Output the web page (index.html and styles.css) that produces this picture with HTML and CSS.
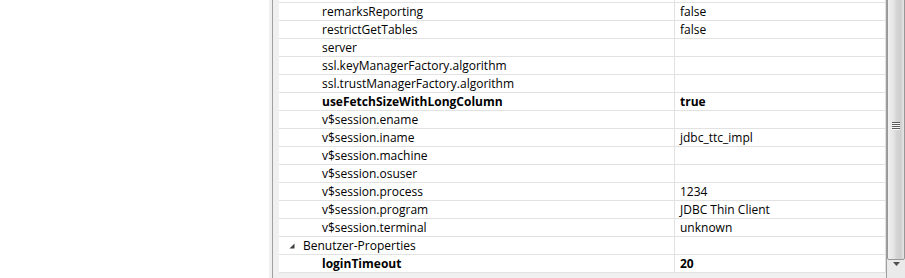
FILE: index.html
```html
<!DOCTYPE html>
<html lang="de">

<head>
    <meta charset="UTF-8">
    <meta name="viewport" content="width=device-width, initial-scale=1.0">
    <title>Properties</title>
    <link rel="stylesheet" href="styles.css">
</head>

<body>
    <div class="container">
        <div class="blank"></div>
        <div class="splitter"></div>

        <div class="panel">
            <div class="gutter"></div>

            <div class="grid">
                <!-- row scrolled out above, only its bottom line shows -->
                <div class="row"><div class="name"></div><div class="value"></div></div>
                <div class="row"><div class="name">remarksReporting</div><div class="value">false</div></div>
                <div class="row"><div class="name">restrictGetTables</div><div class="value">false</div></div>
                <div class="row"><div class="name">server</div><div class="value"></div></div>
                <div class="row"><div class="name">ssl.keyManagerFactory.algorithm</div><div class="value"></div></div>
                <div class="row"><div class="name">ssl.trustManagerFactory.algorithm</div><div class="value"></div></div>
                <div class="row bold"><div class="name">useFetchSizeWithLongColumn</div><div class="value">true</div></div>
                <div class="row"><div class="name">v$session.ename</div><div class="value"></div></div>
                <div class="row"><div class="name">v$session.iname</div><div class="value">jdbc_ttc_impl</div></div>
                <div class="row"><div class="name">v$session.machine</div><div class="value"></div></div>
                <div class="row"><div class="name">v$session.osuser</div><div class="value"></div></div>
                <div class="row"><div class="name">v$session.process</div><div class="value">1234</div></div>
                <div class="row"><div class="name">v$session.program</div><div class="value">JDBC Thin Client</div></div>
                <div class="row"><div class="name">v$session.terminal</div><div class="value">unknown</div></div>
                <div class="row group">
                    <div class="name">
                        <svg class="toggle" width="6" height="6" viewBox="0 0 6 6">
                            <polygon points="5.5,0.5 5.5,5.5 0.5,5.5" fill="#404040" />
                        </svg>
                        Benutzer-Properties
                    </div>
                    <div class="value"></div>
                </div>
                <div class="row bold"><div class="name">loginTimeout</div><div class="value">20</div></div>
            </div>

            <div class="scrollbar">
                <div class="thumb">
                    <div class="grip"><i></i><i></i><i></i><i></i></div>
                </div>
                <div class="arrow">
                    <svg width="7" height="4" viewBox="0 0 7 4">
                        <polygon points="0,0 7,0 3.5,4" fill="#505050" />
                    </svg>
                </div>
            </div>
        </div>
    </div>
</body>

</html>
```

FILE: styles.css
```css
* {
    margin: 0;
    padding: 0;
    box-sizing: border-box;
}

html,
body {
    height: 278px;
    overflow: hidden;
    background-color: #fff;
    font-family: "Open Sans", "Noto Sans", sans-serif;
    font-size: 12px;
    color: #000;
}

.container {
    height: 100%;
    display: flex;
}

.blank {
    width: 269px;
    background-color: #fff;
}

.splitter {
    width: 3px;
    background-color: #f0f0f0;
}

.panel {
    flex: 1 1 auto;
    display: flex;
    border-left: 1px solid #a0a0a0;
    background-color: #f0f0f0;
}

.gutter {
    width: 6px;
}

.grid {
    width: 607px;
    margin-top: -15px;
    align-self: flex-start;
    background-color: #fff;
    border-right: 1px solid #e0e0e0;
}

.row {
    display: flex;
    height: 18px;
    border-bottom: 1px solid #e2e2e2;
    line-height: 18px;
    white-space: nowrap;
}

.row .name {
    width: 396px;
    padding-left: 43px;
    border-right: 1px solid #e2e2e2;
    overflow: hidden;
}

.row .value {
    flex: 1 1 auto;
    padding-left: 5px;
}

.row.bold {
    font-weight: bold;
}

.row.group .name {
    padding-left: 10px;
    display: flex;
    align-items: center;
    gap: 8px;
}

.toggle {
    display: block;
}

.scrollbar {
    width: 19px;
    display: flex;
    flex-direction: column;
    border-left: 1px solid #a0a0a0;
    background-color: #eaeaea;
}

.scrollbar .thumb {
    height: 264px;
    margin-top: -4px;
    border: 1px solid #979797;
    border-radius: 2px;
    background: linear-gradient(to right, #f0f0f0 0%, #e4e4e4 35%, #d4d4d4 55%, #cfcfcf 80%, #e6e6e6 100%);
    display: flex;
    align-items: center;
    justify-content: center;
}

.grip {
    display: flex;
    flex-direction: column;
    gap: 1px;
    margin-top: -6px;
}

.grip i {
    display: block;
    width: 8px;
    height: 1px;
    background-color: #5a5a5a;
    box-shadow: 0 1px 0 #f8f8f8;
}

.scrollbar .arrow {
    display: flex;
    justify-content: center;
    padding-top: 2px;
}

.arrow svg {
    display: block;
}
```
